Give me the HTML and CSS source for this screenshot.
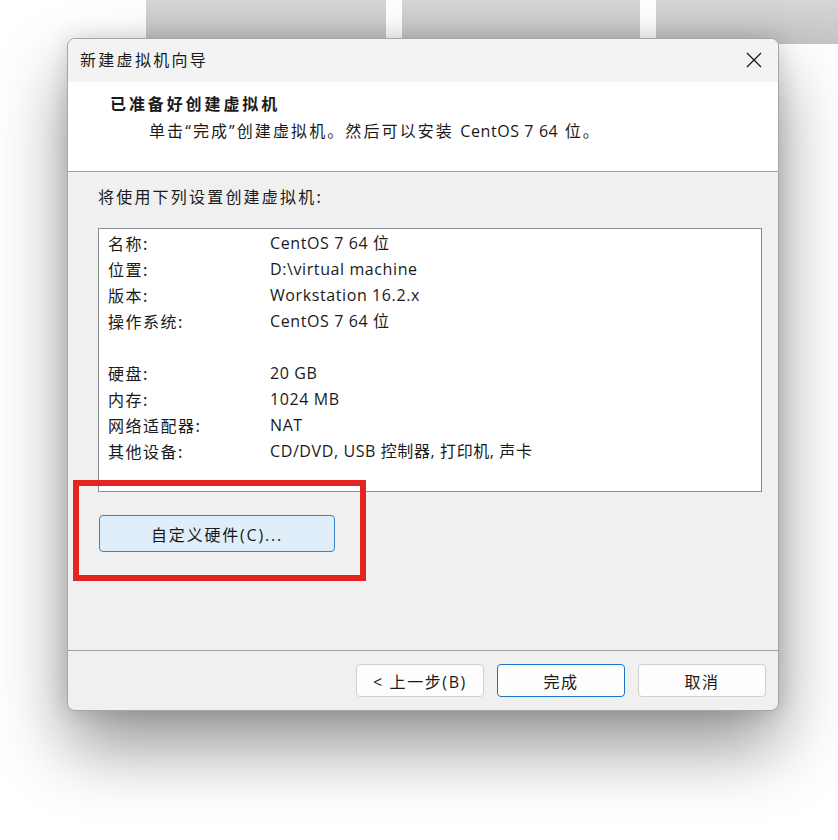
FILE: index.html
```html
<!DOCTYPE html>
<html lang="zh-CN">
<head>
<meta charset="utf-8">
<title>新建虚拟机向导</title>
<link rel="stylesheet" href="styles.css">
</head>
<body>
<div class="desk">
  <div class="bgwin bg1"></div>
  <div class="bgwin bg2"></div>
  <div class="bgwin bg3"></div>
  <div class="dialog">
    <div class="titlebar">
      <span class="title">新建虚拟机向导</span>
      <svg class="close" width="16" height="16" viewBox="0 0 16 16"><path d="M1 1L15 15M15 1L1 15" stroke="#1a1a1a" stroke-width="1.3" fill="none"/></svg>
    </div>
    <div class="header">
      <div class="h-title">已准备好创建虚拟机</div>
      <div class="h-sub">单击“完成”创建虚拟机。然后可以安装 <span class="lat">CentOS 7 64</span> 位。</div>
    </div>
    <div class="body">
      <div class="intro">将使用下列设置创建虚拟机:</div>
      <div class="list">
        <div class="row"><span class="k">名称:</span><span class="v">CentOS 7 64 位</span></div>
        <div class="row"><span class="k">位置:</span><span class="v">D:\virtual machine</span></div>
        <div class="row"><span class="k">版本:</span><span class="v">Workstation 16.2.x</span></div>
        <div class="row"><span class="k">操作系统:</span><span class="v">CentOS 7 64 位</span></div>
        <div class="row"></div>
        <div class="row"><span class="k">硬盘:</span><span class="v">20 GB</span></div>
        <div class="row"><span class="k">内存:</span><span class="v">1024 MB</span></div>
        <div class="row"><span class="k">网络适配器:</span><span class="v">NAT</span></div>
        <div class="row"><span class="k">其他设备:</span><span class="v">CD/DVD, USB 控制器, 打印机, 声卡</span></div>
      </div>
      <button class="custom">自定义硬件(C)...</button>
    </div>
    <div class="footer">
      <button class="btn">&lt; 上一步(B)</button>
      <button class="btn primary">完成</button>
      <button class="btn">取消</button>
    </div>
    <div class="highlight"></div>
  </div>
</div>
</body>
</html>
```
FILE: styles.css
```css
html, body {
  margin: 0;
  padding: 0;
  background: #ffffff;
}
body {
  font-family: "Open Sans", "Noto Sans CJK SC", sans-serif;
  color: #1a1a1a;
}
.desk {
  position: relative;
  width: 838px;
  height: 840px;
  overflow: hidden;
  padding-top: 38px;
  box-sizing: border-box;
}
.bgwin {
  position: absolute;
  top: 0;
  height: 44px;
  background: linear-gradient(#d6d6d6, #c4c4c4);
}
.bg1 { left: 146px; width: 240px; }
.bg2 { left: 402px; width: 238px; }
.bg3 { left: 656px; width: 190px; }

.dialog {
  position: relative;
  margin-left: 67px;
  width: 712px;
  height: 673px;
  box-sizing: border-box;
  border: 1px solid #a6a6a6;
  border-radius: 8px;
  background: #f0f0f0;
  box-shadow: 0 36px 70px rgba(0, 0, 0, 0.42), 0 0 22px rgba(0, 0, 0, 0.14);
  display: flex;
  flex-direction: column;
  overflow: hidden;
}
.titlebar {
  height: 43px;
  flex: none;
  box-sizing: border-box;
  background: #f3f3f3;
  display: flex;
  align-items: center;
  justify-content: space-between;
  padding: 0 16px 3px 12px;
}
.title {
  font-size: 16px;
  letter-spacing: 2.3px;
  font-family: "Noto Sans CJK SC", sans-serif;
  line-height: 20px;
}
.close { display: block; margin-top: 2px; }

.header {
  flex: none;
  box-sizing: border-box;
  background: #ffffff;
  border-bottom: 1px solid #a0a0a0;
  padding: 11px 0 0 42px;
  height: 90px;
}
.h-title {
  font-family: "Noto Sans CJK SC", sans-serif;
  font-weight: 700;
  font-size: 16px;
  letter-spacing: 2.9px;
  line-height: 20px;
}
.h-sub {
  margin: 8px 0 0 39px;
  font-size: 16px;
  line-height: 20px;
  letter-spacing: 2.1px;
  white-space: nowrap;
}
.lat { letter-spacing: 0.6px; }
.body {
  flex: 1;
  padding: 14px 16px 0 30px;
}
.intro {
  font-family: "Noto Sans CJK SC", sans-serif;
  font-size: 16px;
  letter-spacing: 2.2px;
  line-height: 20px;
}
.list {
  margin-top: 22px;
  width: 664px;
  height: 264px;
  box-sizing: border-box;
  border: 1px solid #8c8c94;
  background: #ffffff;
  padding: 1px 0 0 9px;
}
.row {
  display: flex;
  height: 26px;
  line-height: 26px;
  font-size: 16px;
}
.k {
  width: 162px;
  flex: none;
  font-family: "Noto Sans CJK SC", sans-serif;
  letter-spacing: 1.5px;
}
.v { white-space: nowrap; letter-spacing: 0.6px; }

.custom {
  display: block;
  margin: 23px 0 0 1px;
  width: 236px;
  height: 37px;
  box-sizing: border-box;
  border: 1px solid #3c82c8;
  border-radius: 4px;
  background: #e0eef9;
  font-family: inherit;
  font-size: 16px;
  letter-spacing: 1.8px;
  color: #1a1a1a;
  padding: 0;
}

.footer {
  flex: none;
  height: 60px;
  box-sizing: border-box;
  border-top: 1px solid #a0a0a0;
  display: flex;
  justify-content: flex-end;
  gap: 13px;
  padding: 13px 12px 0 0;
}
.btn {
  width: 128px;
  height: 33px;
  box-sizing: border-box;
  border: 1px solid #d0d0d0;
  border-radius: 4px;
  background: #fdfdfd;
  font-family: inherit;
  font-size: 16px;
  color: #1a1a1a;
  padding: 0;
  letter-spacing: 1.6px;
}
.btn.primary {
  border-color: #1f72c4;
}
.highlight {
  position: absolute;
  left: 5px;
  top: 441px;
  width: 293px;
  height: 101px;
  box-sizing: border-box;
  border: 6px solid #e42323;
}
```
